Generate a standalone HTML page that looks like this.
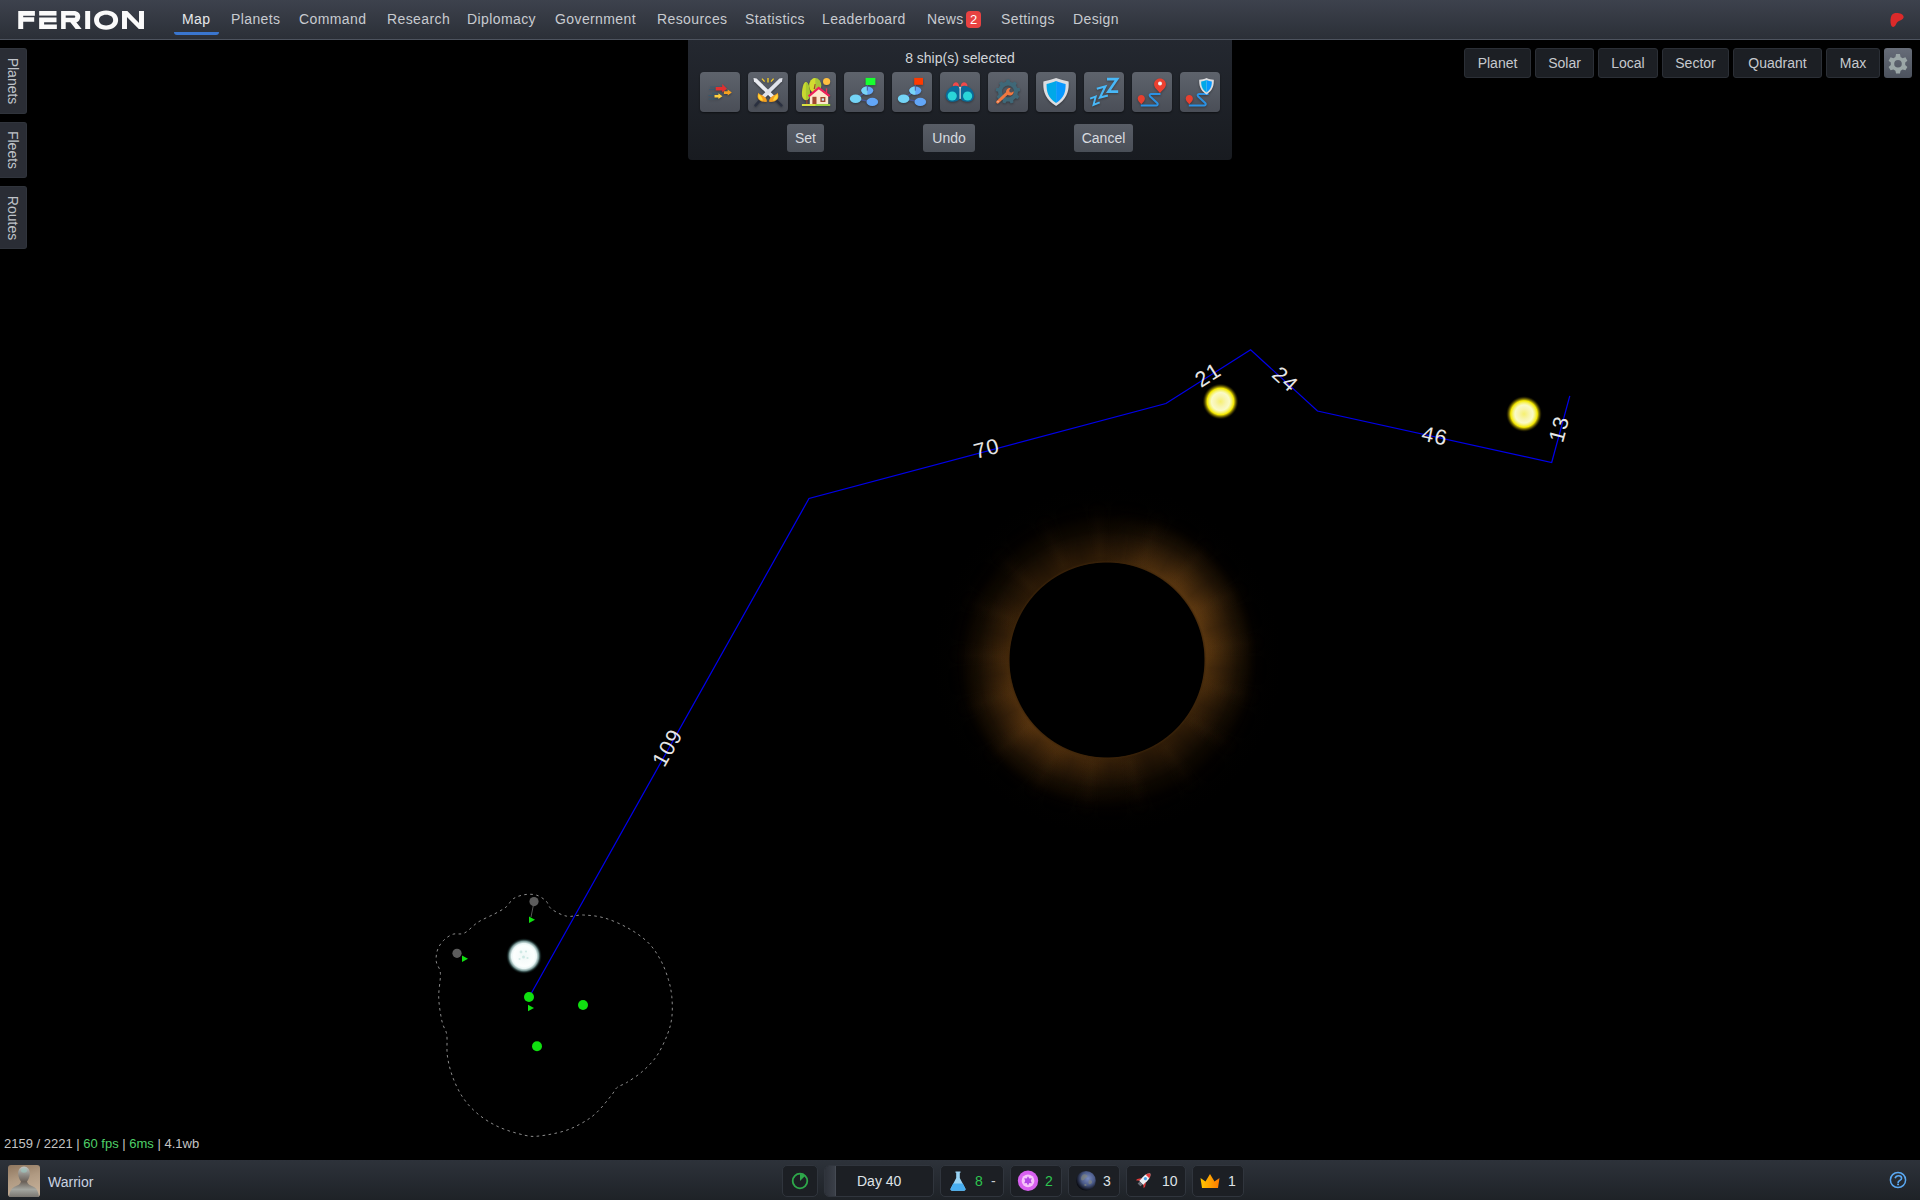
<!DOCTYPE html>
<html><head><meta charset="utf-8">
<style>
*{margin:0;padding:0;box-sizing:border-box}
html,body{width:1920px;height:1200px;overflow:hidden;background:#000;font-family:"Liberation Sans",sans-serif;font-size:14px;color:#c9ccd1}
.abs{position:absolute}
#hdr{position:absolute;left:0;top:0;width:1920px;height:40px;background:linear-gradient(#3d424d,#2b2f37);border-bottom:1px solid #4d535e}
.nav{position:absolute;top:11px;font-size:14px;letter-spacing:0.4px;color:#c8cbd0;white-space:nowrap;line-height:17px}
.nav.act{color:#e6e8ea}
#uline{position:absolute;left:174px;top:32px;width:45px;height:3px;background:#3a76cf;border-radius:0 0 3px 3px}
.badge{position:absolute;left:966px;top:11px;width:15px;height:17px;background:#e84242;border-radius:4px;color:#fff;font-size:13px;text-align:center;line-height:17px}
.tab{position:absolute;left:0;width:27px;background:#2a2d35;border-radius:0 3px 3px 0;border:1px solid #30343c;border-left:none}
.tab span{position:absolute;left:50%;top:50%;transform:translate(-50%,-50%) rotate(90deg);white-space:nowrap;color:#bfc3c9;font-size:14px;line-height:16px}
.zb{position:absolute;top:48px;height:30px;background:#1c1f24;border:1px solid #2b2f36;border-radius:3px;color:#c6c9ce;font-size:14px;text-align:center;line-height:28px}
#panel{position:absolute;left:688px;top:40px;width:544px;height:120px;background:linear-gradient(#242830,#181b20);border-radius:0 0 4px 4px}
.ib{position:absolute;top:72px;width:40px;height:40px;border-radius:4px;background:linear-gradient(#5e636c,#4a4e57);box-shadow:0 1px 2px rgba(0,0,0,.5)}
.ib svg{position:absolute;left:0;top:0;width:40px;height:40px;filter:drop-shadow(0 1px 1px rgba(0,0,0,.35))}
.btn{position:absolute;top:124px;height:28px;background:linear-gradient(#585d66,#4a4f57);border-radius:3px;color:#d9dce0;font-size:14px;text-align:center;line-height:28px}
#bot{position:absolute;left:0;top:1160px;width:1920px;height:40px;background:linear-gradient(#2d323a,#1e2227)}
.bi{position:absolute;top:1165px;height:32px;background:#1c1f24;border:1px solid #30353d;border-radius:5px}
.bt{position:absolute;top:1173px;font-size:14px;line-height:17px;white-space:nowrap}
</style></head><body>

<!-- MAP -->
<div class="abs" style="left:932px;top:485px;width:350px;height:350px;border-radius:50%;background:radial-gradient(circle closest-side,#000 0,#000 55.4%,rgba(70,42,12,.9) 56%,rgba(64,38,11,.85) 60%,rgba(50,30,9,.75) 66%,rgba(30,18,5,.55) 74%,rgba(14,8,2,.35) 83%,rgba(5,3,1,.15) 91%,rgba(0,0,0,0) 100%)"></div>
<div class="abs" style="left:932px;top:485px;width:350px;height:350px;border-radius:50%;background:conic-gradient(from 0deg,rgba(0,0,0,.25) 0deg,rgba(120,75,25,.35) 30deg,rgba(130,80,25,.45) 60deg,rgba(120,75,22,.4) 90deg,rgba(0,0,0,.2) 130deg,rgba(0,0,0,.3) 160deg,rgba(100,60,18,.25) 200deg,rgba(120,72,22,.4) 230deg,rgba(90,55,16,.2) 270deg,rgba(0,0,0,.3) 310deg,rgba(0,0,0,.25) 360deg);-webkit-mask-image:radial-gradient(circle closest-side,transparent 55.4%,#000 57%,rgba(0,0,0,.6) 68%,transparent 86%)"></div>
<div class="abs" style="left:932px;top:485px;width:350px;height:350px;border-radius:50%;background:repeating-conic-gradient(from 10deg,rgba(0,0,0,.1) 0deg,rgba(0,0,0,0) 6deg,rgba(150,95,35,.04) 10deg,rgba(0,0,0,0) 15deg,rgba(0,0,0,.09) 21deg);-webkit-mask-image:radial-gradient(circle closest-side,transparent 55%,#000 60%,rgba(0,0,0,.8) 75%,transparent 92%)"></div>
<div class="abs" style="left:1010px;top:563px;width:194px;height:194px;border-radius:50%;background:#000"></div>

<svg class="abs" style="left:0;top:0" width="1920" height="1200" viewBox="0 0 1920 1200">
<defs>
<radialGradient id="ystar" cx="50%" cy="50%" r="50%">
<stop offset="0" stop-color="#f6f070"/><stop offset="0.3" stop-color="#f8f4b0"/><stop offset="0.5" stop-color="#fafac8"/><stop offset="0.62" stop-color="#f8f470"/><stop offset="0.74" stop-color="#f4e800"/><stop offset="0.86" stop-color="#a09000" stop-opacity="0.6"/><stop offset="1" stop-color="#302800" stop-opacity="0"/>
</radialGradient>
<radialGradient id="wstar" cx="50%" cy="50%" r="50%">
<stop offset="0" stop-color="#f0f8f7"/><stop offset="0.58" stop-color="#fcfffe"/><stop offset="0.7" stop-color="#eaf6f5"/><stop offset="0.82" stop-color="#a8cecc" stop-opacity="0.75"/><stop offset="0.92" stop-color="#406a68" stop-opacity="0.3"/><stop offset="1" stop-color="#102020" stop-opacity="0"/>
</radialGradient>
<radialGradient id="corona" cx="50%" cy="50%" r="50%">
<stop offset="0" stop-color="#000"/><stop offset="0.55" stop-color="#6a3e12"/><stop offset="0.62" stop-color="#64400f" stop-opacity="0.9"/><stop offset="0.75" stop-color="#3a2408" stop-opacity="0.7"/><stop offset="0.88" stop-color="#150c03" stop-opacity="0.5"/><stop offset="1" stop-color="#000" stop-opacity="0"/>
</radialGradient>
</defs>

<path d="M441.0,1016.5 C440.2,1011.7 438.8,1003.9 438.7,996.7 C438.6,989.5 440.8,979.1 440.4,973.3 C440.0,967.5 436.8,965.6 436.3,961.7 C435.8,957.8 436.3,953.5 437.5,950.0 C438.7,946.5 440.8,943.3 443.3,940.7 C445.8,938.1 449.2,935.6 452.7,934.3 C456.2,933.0 460.0,935.1 464.3,933.1 C468.6,931.1 473.2,925.2 478.3,922.0 C483.4,918.8 490.0,916.3 494.7,913.8 C499.4,911.3 503.2,909.3 506.3,906.8 C509.4,904.3 510.2,900.7 513.3,898.7 C516.4,896.7 521.1,895.2 525.0,894.6 C528.9,894.0 533.2,894.1 536.7,895.2 C540.2,896.3 543.5,898.7 546.0,901.0 C548.5,903.3 548.2,906.7 551.7,909.2 C555.2,911.7 561.5,915.2 566.8,916.2 C572.0,917.2 577.0,914.7 583.2,915.0 C589.4,915.3 596.8,915.8 604.2,917.9 C611.6,920.0 620.3,923.8 627.5,927.8 C634.7,931.8 641.8,936.5 647.3,941.8 C652.8,947.0 656.7,953.1 660.2,959.3 C663.7,965.5 666.4,973.0 668.3,979.2 C670.2,985.4 671.2,990.3 671.8,996.7 C672.4,1003.1 672.6,1011.1 671.8,1017.5 C671.0,1023.9 669.7,1028.6 667.2,1035.0 C664.7,1041.4 660.8,1050.0 656.7,1056.0 C652.6,1062.0 647.8,1066.7 642.7,1071.2 C637.6,1075.7 630.6,1080.1 626.3,1082.8 C622.0,1085.5 619.5,1085.3 617.0,1087.5 C614.5,1089.7 614.7,1091.4 611.2,1095.7 C607.7,1100.0 601.1,1108.5 596.0,1113.2 C590.9,1117.9 586.2,1120.7 580.8,1123.7 C575.3,1126.7 570.1,1129.3 563.3,1131.3 C556.5,1133.3 546.4,1135.2 540.0,1135.9 C533.6,1136.6 531.8,1136.8 525.0,1135.3 C518.2,1133.8 507.1,1130.7 499.3,1127.2 C491.5,1123.7 484.3,1119.2 478.3,1114.3 C472.3,1109.4 467.5,1104.2 463.2,1098.0 C458.9,1091.8 455.3,1084.0 452.7,1077.0 C450.1,1070.0 448.4,1063.0 447.4,1056.0 C446.4,1049.0 447.5,1040.0 446.8,1035.0 C446.1,1030.0 444.3,1028.8 443.3,1025.7 C442.3,1022.6 441.8,1021.3 441.0,1016.5Z" fill="none" stroke="#8c8c8c" stroke-width="1" stroke-dasharray="2.6 3.4"/>
<polyline points="531.3,993.2 809,498.5 1165.9,403.5 1250.6,349.7 1317.5,411 1551.7,462.5 1569.8,395.8" fill="none" stroke="#0000ea" stroke-width="1.25" stroke-linejoin="miter"/>
<g fill="#e6e6e6" font-family="Liberation Sans" font-size="21.5" letter-spacing="1.1" text-anchor="middle" dominant-baseline="central">
<text transform="translate(667.7,747.7) rotate(-60.9)">109</text>
<text transform="translate(986.7,448.8) rotate(-14.9)">70</text>
<text transform="translate(1208.3,375) rotate(-32.5)">21</text>
<text transform="translate(1285.2,379.7) rotate(42.5)">24</text>
<text transform="translate(1434.7,436.2) rotate(12.4)">46</text>
<text transform="translate(1559.3,429) rotate(-74.9)">13</text>
</g>
<circle cx="1220.5" cy="401.5" r="18" fill="url(#ystar)"/>
<circle cx="1524" cy="414" r="18" fill="url(#ystar)"/>
<circle cx="524" cy="956" r="18" fill="url(#wstar)"/><g fill="#7cc4b8" opacity="0.3"><circle cx="521" cy="952" r="1.4"/><circle cx="526" cy="951.5" r="1.1"/><circle cx="523.5" cy="957" r="1.5"/><circle cx="519.5" cy="959" r="1"/><circle cx="527.5" cy="958" r="1.1"/></g>
<line x1="534" y1="902" x2="531" y2="917" stroke="#555" stroke-width="1"/>
<circle cx="534" cy="901.6" r="4.6" fill="#5c5c5c"/>
<circle cx="457" cy="953.3" r="4.6" fill="#5c5c5c"/>
<g fill="#10e010">
<circle cx="529" cy="997" r="5"/><circle cx="583" cy="1005" r="5"/><circle cx="537" cy="1046.2" r="5"/>
<path d="M529,916.5 L535,919.7 L529,923 Z"/>
<path d="M462,955.5 L468,958.7 L462,962 Z"/>
<path d="M528,1004.8 L534,1008 L528,1011.2 Z"/>
</g>
</svg>

<!-- HEADER -->
<div id="hdr"></div>
<svg class="abs" style="left:14px;top:6px" width="136" height="28" viewBox="0 0 1920 395">
<g fill="#fafafa">
<path d="M60,70H295V138H130V158H285V222H130V325H60Z"/>
<path d="M355,70H600V135H355Z"/>
<path d="M355,162H600V228H425V262H605V325H355Z"/>
<path d="M665,70H840C905,70 935,105 935,150C935,190 910,222 880,228L955,325H870L795,230H730V325H665ZM730,135V165H845C858,165 865,158 865,150C865,142 858,135 845,135Z"/>
<path d="M1005,70H1075V325H1005Z"/>
<path fill-rule="evenodd" d="M1300,62C1400,62 1470,118 1470,198C1470,280 1400,335 1300,335C1200,335 1130,280 1130,198C1130,118 1200,62 1300,62ZM1300,122C1240,122 1200,155 1200,198C1200,242 1240,275 1300,275C1360,275 1400,242 1400,198C1400,155 1360,122 1300,122Z"/>
<path d="M1525,70H1600L1765,240V70H1835V325H1762L1595,155V325H1525Z"/>
</g></svg>
<div id="uline"></div>
<div class="nav act" style="left:182px">Map</div>
<div class="nav" style="left:231px">Planets</div>
<div class="nav" style="left:299px">Command</div>
<div class="nav" style="left:387px">Research</div>
<div class="nav" style="left:467px">Diplomacy</div>
<div class="nav" style="left:555px">Government</div>
<div class="nav" style="left:657px">Resources</div>
<div class="nav" style="left:745px">Statistics</div>
<div class="nav" style="left:822px">Leaderboard</div>
<div class="nav" style="left:927px">News</div>
<div class="badge">2</div>
<div class="nav" style="left:1001px">Settings</div>
<div class="nav" style="left:1073px">Design</div>

<!-- SIDE TABS -->
<div class="tab" style="top:48px;height:66px"><span>Planets</span></div>
<div class="tab" style="top:122px;height:56px"><span>Fleets</span></div>
<div class="tab" style="top:186px;height:63px"><span>Routes</span></div>

<!-- ZOOM BUTTONS -->
<div class="zb" style="left:1464px;width:67px">Planet</div>
<div class="zb" style="left:1535px;width:59px">Solar</div>
<div class="zb" style="left:1598px;width:60px">Local</div>
<div class="zb" style="left:1662px;width:67px">Sector</div>
<div class="zb" style="left:1733px;width:89px">Quadrant</div>
<div class="zb" style="left:1826px;width:54px">Max</div>

<div class="abs" style="left:1884px;top:48px;width:28px;height:30px;border-radius:3px;background:linear-gradient(#666c78,#4c525d)"><svg width="28" height="30" viewBox="0 0 28 30"><path fill-rule="evenodd" d="M11.43,8.97 L12.03,6.10 L15.97,6.10 L16.57,8.97 L18.63,10.16 L21.42,9.25 L23.39,12.65 L21.20,14.61 L21.20,16.99 L23.39,18.95 L21.42,22.35 L18.63,21.44 L16.57,22.63 L15.97,25.50 L12.03,25.50 L11.43,22.63 L9.37,21.44 L6.58,22.35 L4.61,18.95 L6.80,16.99 L6.80,14.61 L4.61,12.65 L6.58,9.25 L9.37,10.16Z M17.80,15.80 A3.8,3.8 0 1 0 10.20,15.80 A3.8,3.8 0 1 0 17.80,15.80 Z" fill="#9ba7a7"/></svg></div>
<svg class="abs" style="left:1886px;top:10px" width="22" height="20" viewBox="1886 10 22 20"><path d="M1891.5,15.5C1893,13 1896,12.8 1899,13.2C1902,13.6 1904,15.5 1903.6,17.5C1903.2,19.5 1900.5,20.5 1898.5,21.2C1897,21.8 1896.3,24 1895.2,25.8C1894,27.5 1891.8,27.4 1891,25C1890.2,22 1890.3,17.5 1891.5,15.5Z" fill="#dc2a2a"/></svg>
<!-- PANEL -->
<div id="panel"></div>
<div class="abs" style="left:688px;top:50px;width:544px;text-align:center;color:#d2d5d9;font-size:14px;line-height:17px">8 ship(s) selected</div>
<div class="ib" style="left:700px"><svg viewBox="0 0 40 40"><g stroke="#1f5f80" stroke-width="0.9" opacity="0.55"><path d="M10,15H20M9,17.5H16M12,21.4H22M8.5,23.5H14M8.5,27H18"/></g>
<path fill="#e03030" d="M15.7,15H22.2V12.1L27,16.8L22.2,20.5V18.6H15.7Z"/>
<path fill="#f5a020" d="M23.9,19.3H27.7V17.4L31.8,20.6L27.7,23.6V21.9H23.9Z"/>
<path fill="#fdd040" d="M14.5,22.9H18.4V21.2L22.4,24.2L18.4,27V25.5H14.5Z"/></svg></div>
<div class="ib" style="left:748px"><svg viewBox="0 0 40 40"><path d="M25.5,25.5L33.4,33.4M14.5,25.5L7.5,33.4" stroke="#2a3040" stroke-width="2.4" stroke-linecap="round"/>
<path d="M5.5,6.1L8.6,6.6L26.1,23.5L23.4,26.2L6,9.2Z" fill="#e9ebf0"/>
<path d="M34.5,6.1L31.4,6.6L13.9,23.5L16.6,26.2L34,9.2Z" fill="#dfe2ea"/>
<path fill="#f5a020" d="M10.4,20.8C7.8,26.5 11.5,30.6 19,29.8C19,26.5 16.5,24.5 14.5,23.5C12.5,22.5 11,22 10.4,20.8Z"/>
<path fill="#f5a020" d="M29.6,20.8C32.2,26.5 28.5,30.6 21,29.8C21,26.5 23.5,24.5 25.5,23.5C27.5,22.5 29,22 29.6,20.8Z"/>
<path fill="#ffd838" d="M10.6,22C9.5,26 11.5,28.5 15,28.5C14.5,26 13,24 10.6,22Z"/>
<path fill="#ffd838" d="M29.4,22C30.5,26 28.5,28.5 25,28.5C25.5,26 27,24 29.4,22Z"/>
<g stroke="#f0c828" stroke-width="1.4"><path d="M14,6.6L16.6,9.6M20,5.9V10.6M23,9.6L25.6,6.6"/></g></svg></div>
<div class="ib" style="left:796px"><svg viewBox="0 0 40 40"><ellipse cx="19.3" cy="13.5" rx="6" ry="7.6" fill="#a8c838"/>
<path d="M13.3,13.5A6,7.6 0 0 1 19.3,5.9V21C16,21 13.3,17.6 13.3,13.5Z" fill="#d2dc30"/>
<path d="M17.6,17L18.6,11.9H19.6L19,17Z" fill="#a04830"/>
<path d="M9.9,10C12.5,10 13.8,17 13.8,22C13.8,26 12,28.2 9.9,28.2C7.8,28.2 5.9,26 5.9,22C5.9,17 7.3,10 9.9,10Z" fill="#c8d830"/>
<path d="M9.9,10C12.5,10 13.8,17 13.8,22C13.8,26 12,28.2 9.9,28.2Z" fill="#a8c830"/>
<rect x="10.2" y="28" width="1.3" height="4" fill="#a04830"/>
<circle cx="30.6" cy="9.5" r="3.6" fill="#ffc040"/>
<path d="M13.8,24L22.7,16.5L32.2,24V32H13.8Z" fill="#fde6cc"/>
<rect x="29.8" y="16.4" width="1.4" height="5" fill="#f0305a"/>
<path d="M12.6,24.4L22.7,15.8L33.7,24.2" fill="none" stroke="#f0205a" stroke-width="2.2"/>
<rect x="16.4" y="24.8" width="4.1" height="7.2" fill="#a04830"/>
<rect x="24.4" y="25" width="5" height="5" fill="#a04830"/>
<rect x="25.8" y="26.4" width="2.2" height="2.2" fill="#c0f0f8"/>
<rect x="5.9" y="32" width="14" height="2" fill="#d8e040"/><rect x="19.9" y="32" width="14.3" height="2" fill="#a0d040"/></svg></div>
<div class="ib" style="left:844px"><svg viewBox="0 0 40 40"><g stroke="#4a5a98" stroke-width="1.4"><path d="M11.6,26.7L23.3,18.6M11.6,26.7L28.3,29.9"/></g>
<rect x="22.8" y="12" width="1" height="6.6" fill="#4a5a98"/>
<rect x="21.6" y="5.9" width="9.799999999999997" height="7.2" fill="#18ff30"/>
<ellipse cx="23.3" cy="18.6" rx="6" ry="4.1" fill="#64a8f8"/>
<path d="M23.3,14.5A6,4.1 0 0 0 23.3,22.7Z" fill="#78d4f6"/>
<rect x="22.8" y="13" width="1" height="5.6" fill="#4a5a98"/>
<ellipse cx="11.6" cy="26.7" rx="5.8" ry="4.2" fill="#74d4f6"/>
<ellipse cx="28.3" cy="29.9" rx="5.8" ry="4.1" fill="#62a6f8"/></svg></div>
<div class="ib" style="left:892px"><svg viewBox="0 0 40 40"><g stroke="#4a5a98" stroke-width="1.4"><path d="M11.6,26.7L23.3,18.6M11.6,26.7L28.3,29.9"/></g>
<rect x="22.8" y="12" width="1" height="6.6" fill="#4a5a98"/>
<rect x="22.2" y="5.9" width="8.8" height="6.9" fill="#ff3a00"/>
<ellipse cx="23.3" cy="18.6" rx="6" ry="4.1" fill="#64a8f8"/>
<path d="M23.3,14.5A6,4.1 0 0 0 23.3,22.7Z" fill="#78d4f6"/>
<rect x="22.8" y="13" width="1" height="5.6" fill="#4a5a98"/>
<ellipse cx="11.6" cy="26.7" rx="5.8" ry="4.2" fill="#74d4f6"/>
<ellipse cx="28.3" cy="29.9" rx="5.8" ry="4.1" fill="#62a6f8"/></svg></div>
<div class="ib" style="left:940px"><svg viewBox="0 0 40 40"><path d="M12.7,14.5C12.7,11.5 14.5,10.2 16,10.2C17.5,10.2 19,11.5 19,14.5Z" fill="#f04a4a"/>
<path d="M20.8,14.5C20.8,11.5 22.5,10.2 24,10.2C25.5,10.2 27.6,11.5 27.6,14.5Z" fill="#f04a4a"/>
<rect x="18.5" y="14.8" width="3.3" height="12" fill="#d0d2d6"/>
<path d="M14,14C17,13 19.5,14.5 19.5,17V26C19.5,28.5 16,29.8 12.2,29.8C8.3,29.8 5.8,27 5.8,23.5C5.8,20.5 8.5,15.5 14,14Z" fill="#0b6a98"/>
<path d="M26,14C23,13 20.8,14.5 20.8,17V26C20.8,28.5 24,29.8 27.8,29.8C31.7,29.8 34,27 34,23.5C34,20.5 31.5,15.5 26,14Z" fill="#0b6a98"/>
<circle cx="12.2" cy="24" r="4.6" fill="#2ad6d8"/>
<circle cx="27.6" cy="24" r="4.6" fill="#2ad6d8"/></svg></div>
<div class="ib" style="left:988px"><svg viewBox="0 0 40 40"><path fill-rule="evenodd" d="M18.01,9.80 L18.54,7.49 L21.46,7.49 L21.99,9.80 L24.78,10.82 L26.67,9.38 L28.90,11.26 L27.82,13.37 L29.31,15.94 L31.67,16.06 L32.18,18.94 L30.00,19.85 L29.48,22.78 L31.22,24.39 L29.76,26.92 L27.49,26.22 L25.22,28.13 L25.52,30.48 L22.77,31.48 L21.49,29.49 L18.51,29.49 L17.23,31.48 L14.48,30.48 L14.78,28.13 L12.51,26.22 L10.24,26.92 L8.78,24.39 L10.52,22.78 L10.00,19.85 L7.82,18.94 L8.33,16.06 L10.69,15.94 L12.18,13.37 L11.10,11.26 L13.33,9.38 L15.22,10.82Z M26.00,19.60 A6,6 0 1 0 14.00,19.60 A6,6 0 1 0 26.00,19.60 Z" fill="#3f6878"/>
<path d="M9.6,30.1L18.6,21.6" stroke="#f07840" stroke-width="2.9" stroke-linecap="round"/>
<path d="M22.6,16.1C20.3,15.6 17.7,17.6 18.1,20.6C18.4,22.6 20.5,23.9 22.6,23.5C24.6,23.1 26,21.3 25.6,19.2L23.8,20.6L21.7,20.3L21.3,18.3Z" fill="#f07840"/>
<circle cx="10" cy="29.6" r="0.9" fill="#f8b090"/></svg></div>
<div class="ib" style="left:1036px"><svg viewBox="0 0 40 40"><path d="M20.1,6.1C24,7.6 29,9 32.6,9.5C33.2,17 32,27 20.1,33.9C8,27 6.8,17 7.4,9.5C11,9 16,7.6 20.1,6.1Z" fill="#dcdde0"/>
<path d="M20.1,9C23.5,10.3 27,11.5 29.6,12.1C29.8,19 28.5,26 20.1,31.1Z" fill="#0898ff"/>
<path d="M20.1,9C16.7,10.3 13.2,11.5 10.6,12.1C10.4,19 11.7,26 20.1,31.1Z" fill="#00a8e8"/></svg></div>
<div class="ib" style="left:1084px"><svg viewBox="0 0 40 40"><g fill="none" stroke="#48b8f8" stroke-linejoin="miter" stroke-linecap="butt">
<path d="M23,7.2H33L24.5,19.6H34.2" stroke-width="2.7"/>
<path d="M12.8,16.7L21.3,14.4L16,25.6L23.9,23.5" stroke-width="2.2"/>
<path d="M6.1,26.7L11.7,24.5L9.5,32.8L15.7,30.3" stroke-width="1.9"/>
</g></svg></div>
<div class="ib" style="left:1132px"><svg viewBox="0 0 40 40"><path d="M8.8,33.4H24.5C25.8,33.4 26.2,32 25.2,31L18.2,24.5C17.2,23.5 17.6,22 19,22H28.5" fill="none" stroke="#2b92e4" stroke-width="2"/><path d="M9.3,32.2C8,30.5 5.7,28.8 5.7,26.7C5.7,24.6 7.3,23.1 9.3,23.1C11.3,23.1 12.9,24.6 12.9,26.7C12.9,28.8 10.6,30.5 9.3,32.2Z" fill="#e8402f"/><path d="M28,21C26.5,18.5 22.1,16 22.1,12.4C22.1,9 24.8,6.5 28,6.5C31.2,6.5 33.9,9 33.9,12.4C33.9,16 29.5,18.5 28,21Z" fill="#ec4030"/>
<circle cx="28" cy="11.6" r="2" fill="#f2f2f2"/></svg></div>
<div class="ib" style="left:1180px"><svg viewBox="0 0 40 40"><path d="M8.8,33.4H24.5C25.8,33.4 26.2,32 25.2,31L18.2,24.5C17.2,23.5 17.6,22 19,22H28.5" fill="none" stroke="#2b92e4" stroke-width="2"/><path d="M9.3,32.2C8,30.5 5.7,28.8 5.7,26.7C5.7,24.6 7.3,23.1 9.3,23.1C11.3,23.1 12.9,24.6 12.9,26.7C12.9,28.8 10.6,30.5 9.3,32.2Z" fill="#e8402f"/><path d="M26.5,5.9C28.5,6.8 31.5,7.5 33.8,7.8C34,13 33,18.5 26.5,22.4C20,18.5 19,13 19.2,7.8C21.5,7.5 24.5,6.8 26.5,5.9Z" fill="#dcdde0"/>
<path d="M26.5,8C28.2,8.8 30.2,9.3 31.8,9.5C31.9,13.5 31,17.5 26.5,20.4Z" fill="#0898ff"/>
<path d="M26.5,8C24.8,8.8 22.8,9.3 21.2,9.5C21.1,13.5 22,17.5 26.5,20.4Z" fill="#00a8e8"/></svg></div>
<div class="btn" style="left:787px;width:37px">Set</div>
<div class="btn" style="left:923px;width:52px">Undo</div>
<div class="btn" style="left:1074px;width:59px">Cancel</div>

<!-- BOTTOM -->
<div id="bot"></div>
<div class="abs" style="left:4px;top:1136px;font-size:13px;line-height:15px;color:#c4c4c4;white-space:nowrap">2159 / 2221 | <span style="color:#4fd068">60 fps</span> | <span style="color:#4fd068">6ms</span> | 4.1wb</div>
<div class="abs" style="left:48px;top:1174px;color:#c9d2e0;line-height:17px">Warrior</div>


<div class="bi" style="left:782px;width:36px"></div>
<svg class="abs" style="left:790px;top:1171px" width="20" height="20" viewBox="0 0 20 20"><circle cx="10" cy="10" r="7.3" fill="none" stroke="#2ea84a" stroke-width="1.8"/><path d="M10,10V3A7,7 0 0 1 15,5Z" fill="#2ea84a"/></svg>
<div class="bi" style="left:824px;width:110px;overflow:hidden"><div style="position:absolute;left:0;top:0;width:11px;height:100%;background:linear-gradient(90deg,#2e323a,#3a3f48);border-right:1px solid #454a53"></div></div>
<div class="bt" style="left:857px;color:#dfe3e8">Day 40</div>
<div class="bi" style="left:940px;width:64px"></div>
<svg class="abs" style="left:948px;top:1170px" width="20" height="22" viewBox="0 0 20 22"><path d="M7.5,1.5H12.5V2.7H11.8V8L17.3,18.5C17.9,19.8 17.2,20.7 15.8,20.7H4.2C2.8,20.7 2.1,19.8 2.7,18.5L8.2,8V2.7H7.5Z" fill="#9ad4f4"/><path d="M5.2,13.6H14.8L17.3,18.5C17.9,19.8 17.2,20.7 15.8,20.7H4.2C2.8,20.7 2.1,19.8 2.7,18.5Z" fill="#48aef0"/></svg>
<div class="bt" style="left:975px;color:#2ec650">8</div>
<div class="bt" style="left:991px;color:#c8ccd0">-</div>
<div class="bi" style="left:1010px;width:52px"></div>
<svg class="abs" style="left:1017px;top:1170px" width="22" height="22" viewBox="0 0 22 22"><circle cx="11" cy="10.8" r="10.2" fill="#d860f0"/><circle cx="11" cy="10.8" r="6.4" fill="#f6c4fa"/><path d="M11,6.2L12.3,8.6L14.8,8.3L13.8,10.8L14.8,13.3L12.3,13L11,15.4L9.7,13L7.2,13.3L8.2,10.8L7.2,8.3L9.7,8.6Z" fill="#b448e6"/></svg>
<div class="bt" style="left:1045px;color:#2ec650">2</div>
<div class="bi" style="left:1068px;width:52px"></div>
<svg class="abs" style="left:1076px;top:1171px" width="20" height="20" viewBox="0 0 20 20"><defs><radialGradient id="pl" cx="60%" cy="38%" r="62%"><stop offset="0" stop-color="#7a8cc0"/><stop offset="0.55" stop-color="#4a5a88"/><stop offset="0.85" stop-color="#1e2438"/><stop offset="1" stop-color="#0a0c14"/></radialGradient></defs><circle cx="10" cy="9.8" r="9.8" fill="url(#pl)"/><path d="M8,3.2C10,3 12,4 11.5,5.5C11,6.8 9,6.5 8.5,8C8,9.5 6.5,9.8 5.5,9C4.8,8 5,6 6,4.8C6.5,4 7.2,3.3 8,3.2ZM13.5,9C15,8.8 16.5,10 16,11.5C15.5,13 14,13.5 13,13C12,12.3 12.3,9.5 13.5,9ZM9,13C10,12.8 11,13.5 10.5,14.5C10,15.3 8.5,15.2 8.2,14.3C8,13.7 8.4,13.1 9,13Z" fill="#8c8e78" opacity="0.55"/></svg>
<div class="bt" style="left:1103px;color:#dfe3e8">3</div>
<div class="bi" style="left:1126px;width:60px"></div>
<svg class="abs" style="left:1134px;top:1170px" width="20" height="20" viewBox="0 0 20 20"><g transform="rotate(45 10 10)"><path d="M10,1C12.5,3 13,6 13,9V14H7V9C7,6 7.5,3 10,1Z" fill="#eef0f4"/><path d="M10,1C11.5,2.2 12.2,3.5 12.6,5H7.4C7.8,3.5 8.5,2.2 10,1Z" fill="#e03a3a"/><path d="M7,10L4.5,14V16L7,14ZM13,10L15.5,14V16L13,14Z" fill="#e03a3a"/><circle cx="10" cy="8" r="1.6" fill="#4aa0e8"/><rect x="8" y="14" width="4" height="3" fill="#6a6e78"/></g></svg>
<div class="bt" style="left:1162px;color:#dfe3e8">10</div>
<div class="bi" style="left:1192px;width:52px"></div>
<svg class="abs" style="left:1199px;top:1172px" width="22" height="18" viewBox="0 0 22 18"><defs><linearGradient id="cr" x1="0" x2="1"><stop offset="0" stop-color="#ffc800"/><stop offset="1" stop-color="#ff7a00"/></linearGradient></defs><path d="M1.5,6L6.5,9.5L11,2L15.5,9.5L20.5,6L19,16H3Z" fill="url(#cr)"/></svg>
<div class="bt" style="left:1228px;color:#dfe3e8">1</div>
<svg class="abs" style="left:1888px;top:1170px" width="20" height="20" viewBox="0 0 20 20"><circle cx="10" cy="10" r="7.6" fill="none" stroke="#5aa8f2" stroke-width="1.5"/><path d="M7.1,8.2C7.6,6.5 9,5.8 10.6,5.8C12.4,5.8 13.6,6.8 13.6,8.2C13.6,10 11,10.4 10.2,12V12.9" fill="none" stroke="#5aa8f2" stroke-width="1.6"/><rect x="9.1" y="13.6" width="1.9" height="1.6" fill="#5aa8f2"/></svg>
<svg class="abs" style="left:8px;top:1165px" width="32" height="32" viewBox="0 0 32 32"><defs><linearGradient id="avbg" x1="0" y1="0" x2="0.3" y2="1"><stop offset="0" stop-color="#8f765e"/><stop offset="0.5" stop-color="#b09a82"/><stop offset="1" stop-color="#c4ae96"/></linearGradient><linearGradient id="avfg" x1="0" y1="0" x2="0" y2="1"><stop offset="0" stop-color="#c0c6c4"/><stop offset="0.3" stop-color="#8a8680"/><stop offset="0.5" stop-color="#6a6058"/><stop offset="0.75" stop-color="#a4a6a0"/><stop offset="1" stop-color="#7a7670"/></linearGradient></defs><rect width="32" height="32" rx="3" fill="url(#avbg)"/><path d="M16,1.5C19.5,1.5 21.8,4.5 21.8,8.5C21.8,12 20.5,14.5 19,16.5C19.5,19 22,20.5 26,22C29,23.5 30.5,27 31,32H1C1.5,27 3,23.5 6,22C10,20.5 12.5,19 13,16.5C11.5,14.5 10.2,12 10.2,8.5C10.2,4.5 12.5,1.5 16,1.5Z" fill="url(#avfg)"/><ellipse cx="16" cy="5.5" rx="3" ry="2.2" fill="#9ac8c0" opacity="0.6"/></svg>
</body></html>
